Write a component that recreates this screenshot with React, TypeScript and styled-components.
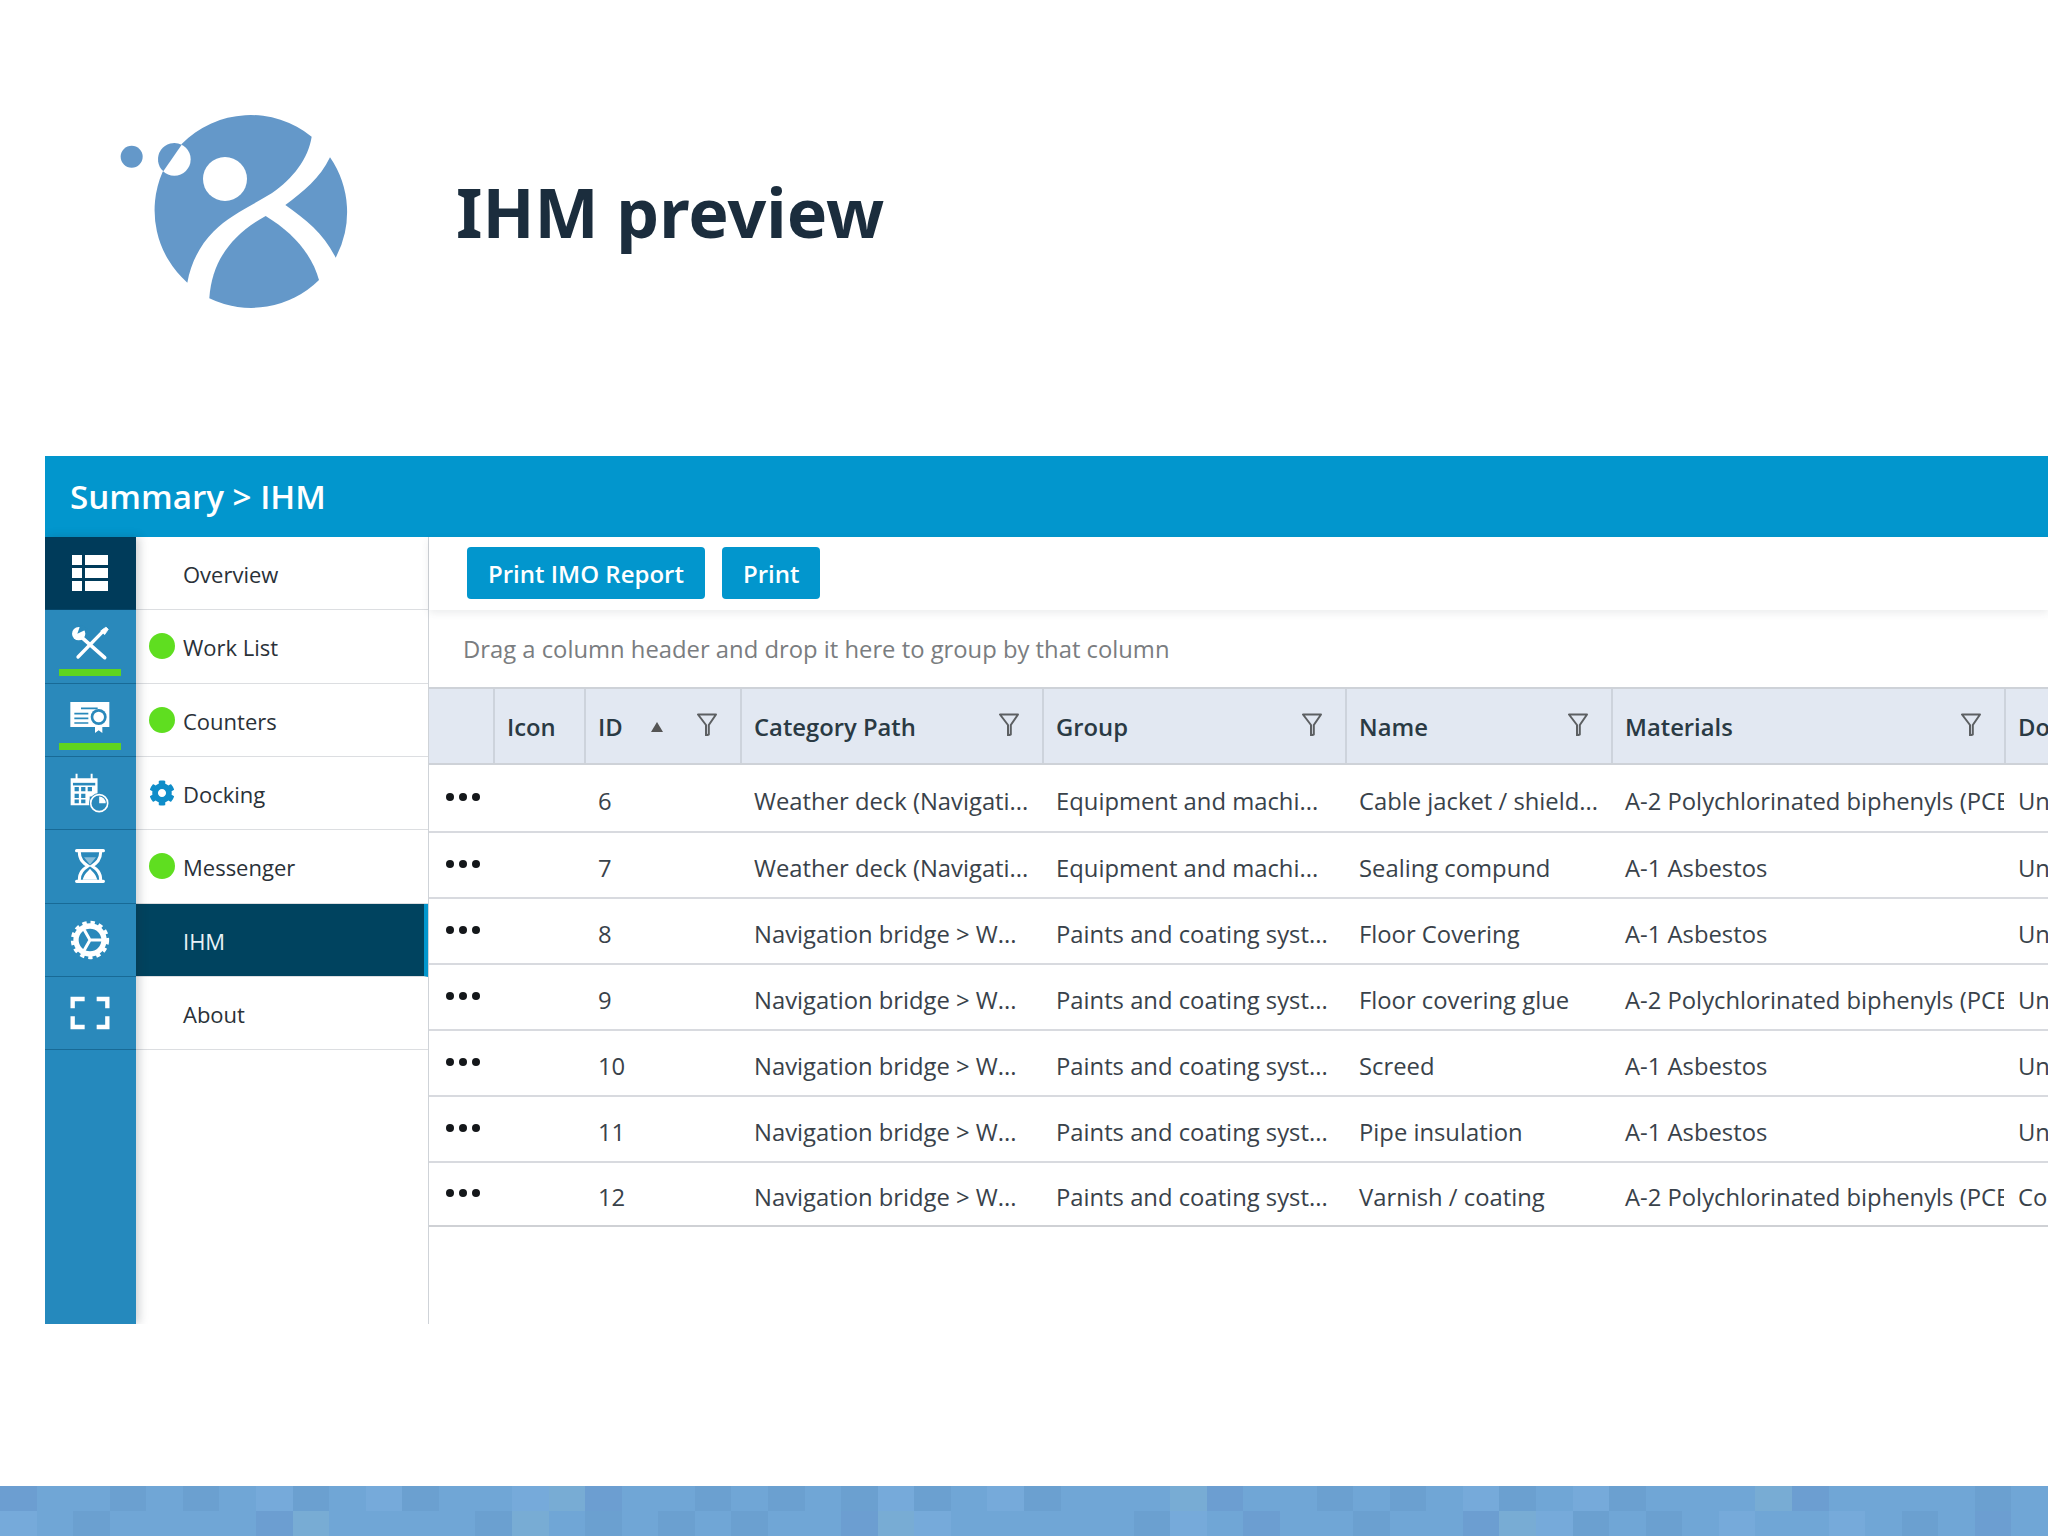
import React from "react";
import styled, { createGlobalStyle } from "styled-components";
import { FaCog } from "react-icons/fa";

const Global = createGlobalStyle`
  html, body { margin: 0; padding: 0; background: #fff; }
  body { font-family: "Open Sans", "Noto Sans", sans-serif; overflow: hidden; }
`;

const Page = styled.div`
  width: 2048px;
  height: 1536px;
  display: flex;
  flex-direction: column;
  overflow: hidden;
  background: #fff;
`;

const Hero = styled.header`
  display: flex;
  align-items: center;
  gap: 66px;
  height: 240px;
  padding: 90px 0 0 90px;
`;

const LogoSvg = styled.svg`
  width: 300px;
  height: 240px;
  flex: none;
`;

const Title = styled.h1`
  margin: 4px 0 0;
  font-family: "Noto Sans", sans-serif;
  font-weight: 700;
  font-size: 68px;
  line-height: 1;
  color: #1b2d3d;
`;

const Frame = styled.section`
  margin: 126px 0 0 45px;
  height: 868px;
  display: flex;
  flex-direction: column;
  overflow: hidden;
`;

const TopBar = styled.div`
  height: 81px;
  flex: none;
  display: flex;
  align-items: center;
  padding-left: 25px;
  background: #0296cd;
  color: #fff;
  font-weight: 600;
  font-size: 33.2px;
`;

const Body = styled.div`
  flex: 1;
  display: flex;
  min-height: 0;
`;

const Rail = styled.nav`
  width: 91px;
  flex: none;
  position: relative;
  z-index: 2;
  background: #2589bd;
  box-shadow: 3px 0 9px rgba(30, 40, 50, 0.22);
`;

const RailItem = styled.div<{ $active?: boolean; $status?: boolean }>`
  height: 73.33px;
  box-sizing: border-box;
  display: flex;
  flex-direction: column;
  align-items: center;
  justify-content: ${(p) => (p.$status ? "flex-start" : "center")};
  padding: ${(p) => (p.$status ? "13px" : "0")} 2px 0 0;
  gap: 6px;
  background: ${(p) => (p.$active ? "#003b5a" : "#2a89bb")};
  border-bottom: 1px solid rgba(10, 80, 120, 0.55);
`;

const RailIcon = styled.svg`
  width: 40px;
  height: 40px;
  flex: none;
  color: #fff;
`;

const StatusBar = styled.div`
  width: 62px;
  height: 7px;
  flex: none;
  background: #5fd41f;
`;

const Menu = styled.div`
  width: 293px;
  flex: none;
  box-sizing: border-box;
  border-right: 1px solid #cfd3d8;
  background: #fff;
`;

const MenuItem = styled.div<{ $active?: boolean }>`
  height: 73.33px;
  box-sizing: border-box;
  display: flex;
  align-items: center;
  padding-left: 13px;
  gap: 8px;
  font-size: 22px;
  color: ${(p) => (p.$active ? "#e8f2f7" : "#2a3138")};
  background: ${(p) => (p.$active ? "#00435f" : "#fff")};
  border-bottom: 1px solid #dcdee1;
  border-right: ${(p) => (p.$active ? "4px solid #0296cd" : "0")};
`;

const MenuLabel = styled.span`
  padding-top: 2px;
`;

const MenuMark = styled.span`
  width: 26px;
  height: 26px;
  flex: none;
  display: flex;
  align-items: center;
  justify-content: center;
  color: #0f8dc9;
  font-size: 26px;
`;

const GreenDot = styled.span`
  width: 26px;
  height: 26px;
  border-radius: 50%;
  background: #5fde20;
`;

const Main = styled.main`
  flex: 1;
  min-width: 0;
  display: flex;
  flex-direction: column;
  background: #fff;
`;

const Toolbar = styled.div`
  height: 73px;
  flex: none;
  box-sizing: border-box;
  display: flex;
  align-items: center;
  gap: 17px;
  padding: 0 0 1px 38px;
  position: relative;
  background: #fff;
  box-shadow: 0 3px 8px rgba(60, 70, 80, 0.1);
`;

const Button = styled.button`
  height: 52px;
  padding: 0 21px;
  border: 0;
  border-radius: 4px;
  background: #0296cd;
  color: #fff;
  font-family: "Open Sans", sans-serif;
  font-weight: 600;
  font-size: 24px;
`;

const GroupBar = styled.div`
  height: 77px;
  flex: none;
  box-sizing: border-box;
  display: flex;
  align-items: center;
  padding-left: 34px;
  color: #7a7d80;
  font-size: 23.8px;
`;

const columns = "64px 91px 156px 302px 303px 266px 393px 44px";

const HeaderRow = styled.div`
  height: 78px;
  flex: none;
  box-sizing: border-box;
  display: grid;
  grid-template-columns: ${columns};
  background: #e2e8f2;
  border-top: 2px solid #ced2d8;
  border-bottom: 2px solid #ced2d8;
`;

const HeadCell = styled.div`
  display: flex;
  align-items: center;
  box-sizing: border-box;
  padding: 2px 23px 0 12px;
  overflow: hidden;
  white-space: nowrap;
  font-weight: 600;
  font-size: 23.8px;
  color: #2a3a44;
  & + & {
    border-left: 2px solid #cdd3dc;
  }
`;

const SortMark = styled.span`
  width: 0;
  height: 0;
  margin-left: 28px;
  border-left: 6px solid transparent;
  border-right: 6px solid transparent;
  border-bottom: 10px solid #555;
`;

const FilterIcon = styled.svg`
  width: 20px;
  height: 23px;
  flex: none;
  margin: -5px 0 0 auto;
`;

const TableRow = styled.div`
  height: 66px;
  flex: none;
  box-sizing: border-box;
  display: grid;
  grid-template-columns: ${columns};
  border-bottom: 2px solid #d8dadf;
  &:first-of-type {
    height: 68px;
  }
  &:last-child {
    height: 64px;
    border-bottom-color: #cfd1d5;
  }
`;

const Cell = styled.div`
  display: flex;
  align-items: center;
  box-sizing: border-box;
  padding: 5px 0 0 14px;
  overflow: hidden;
  white-space: nowrap;
  font-size: 23.8px;
  color: #39424a;
`;

const DotsCell = styled.div`
  display: flex;
  align-items: center;
  gap: 5px;
  padding: 0 0 2px 17px;
`;

const Dot = styled.span`
  width: 8px;
  height: 8px;
  border-radius: 50%;
  background: #14171a;
`;

const Footer = styled.footer`
  margin-top: auto;
  height: 50px;
  flex: none;
  display: grid;
  grid-template-columns: repeat(56, 1fr);
  grid-template-rows: 25px 25px;
`;

const tileColor: Record<string, string> = {
  a: "#70a6d6",
  b: "#6ba0d0",
  c: "#76aada",
  d: "#78acd4",
  e: "#6c9ed1",
};

const Tile = styled.i<{ $tone: string }>`
  display: block;
  background: ${(p) => tileColor[p.$tone]};
`;

const row1 = "eaababacbacbaacdeaa" + "bababcbacbaaadeaaba" + "bacbacbaaadeaaaaba";
const row2 = "cabaaaaedaaaabdabab" + "abaaedcaaaaabcaeaab" + "aaedcbabacaacabaeaa";

const Funnel = () => (
  <FilterIcon viewBox="0 0 20 23" fill="none" stroke="#5c5f62" strokeWidth="2">
    <path d="M1 1.5h18L11.8 12V21.5L9 22.5V12z" strokeLinejoin="round" />
  </FilterIcon>
);

const Logo = () => (
  <LogoSvg viewBox="0 0 900 720" aria-label="logo">
    <g fill="#6498c9">
      <circle cx="125" cy="200" r="33" />
      <path d="M275 162A290 290 0 0 1 665 140C655 205 610 265 545 310C480 350 420 375 370 425C330 465 302 520 292 578A289 289 0 0 1 218 245z" />
      <path d="M720 202A289 289 0 0 1 737 503C700 430 650 390 586 345C640 305 690 265 720 202z" />
      <path d="M527 378C605 425 665 490 687 570A289 289 0 0 1 358 625C365 510 430 430 527 378z" />
    </g>
    <circle cx="253" cy="208" r="49" fill="#fff" />
    <path d="M275 164A49 49 0 0 0 220 244z" fill="#6498c9" />
    <circle cx="405" cy="267" r="66" fill="#fff" />
  </LogoSvg>
);

const ListIcon = () => (
  <RailIcon viewBox="0 0 40 40" fill="currentColor">
    <rect x="2" y="2" width="10" height="10" />
    <rect x="15" y="2" width="23" height="10" />
    <rect x="2" y="15" width="10" height="10" />
    <rect x="15" y="15" width="23" height="10" />
    <rect x="2" y="28" width="10" height="10" />
    <rect x="15" y="28" width="23" height="10" />
  </RailIcon>
);

const ToolsIcon = () => (
  <RailIcon viewBox="30 22 120 120" fill="none" stroke="currentColor">
    <path d="M132 44L54 124" strokeWidth="10" strokeLinecap="round" />
    <path d="M122 46l16-12 7 7-11 16z" fill="currentColor" strokeWidth="2" />
    <path d="M66 66L134 126" strokeWidth="11" strokeLinecap="round" />
    <circle cx="56" cy="54" r="20" fill="currentColor" stroke="none" />
    <path d="M52 54L62 26 82 40z" fill="#2a89bb" stroke="none" />
  </RailIcon>
);

const CertIcon = () => (
  <RailIcon viewBox="29 240 120 120" fill="none">
    <path d="M30 255H147V330H126V348L115 340 104 348V330H30z" fill="currentColor" />
    <path d="M42 290H84M42 304H84M42 318H84M62 274H112" stroke="#2a89bb" strokeWidth="5" />
    <circle cx="115" cy="300" r="24" fill="#2a89bb" />
    <circle cx="115" cy="300" r="16" fill="currentColor" />
  </RailIcon>
);

const CalendarIcon = () => (
  <RailIcon viewBox="28 20 122 122" fill="none">
    <path d="M30 36H112V92H88V118H30z" fill="currentColor" />
    <path d="M48 22V42M94 22V42" stroke="currentColor" strokeWidth="6" />
    <path d="M37 50H105V58H37z" fill="#2a89bb" />
    <path
      d="M42 63h13v13H42zM62 63h13v13H62zM82 63h13v13H82zM42 83h13v13H42zM62 83h13v13H62zM42 101h13v11H42zM62 101h13v11H62z"
      fill="#2a89bb"
    />
    <circle cx="117" cy="112" r="31" fill="#2a89bb" />
    <circle cx="117" cy="112" r="26" stroke="currentColor" strokeWidth="5" />
    <path d="M117 92V112H137A20 20 0 0 0 117 92z" fill="currentColor" />
  </RailIcon>
);

const HourglassIcon = () => (
  <RailIcon viewBox="30 244 120 120" fill="none" stroke="currentColor">
    <path d="M50 258H130M50 350H130" strokeWidth="10" strokeLinecap="round" />
    <path d="M58 262C58 285 70 295 84 304C70 313 58 323 58 346M122 262C122 285 110 295 96 304C110 313 122 323 122 346" strokeWidth="9" />
    <path d="M68 345C74 325 84 320 90 312C96 320 106 325 112 345z" fill="currentColor" stroke="none" />
    <path d="M72 278H108L90 300z" fill="currentColor" stroke="none" opacity="0.45" />
  </RailIcon>
);

const GearIcon = () => (
  <RailIcon viewBox="28 25 120 120" fill="none" stroke="currentColor">
    <circle cx="88" cy="85" r="42" strokeWidth="16" />
    <circle cx="88" cy="85" r="52" strokeWidth="11" strokeDasharray="13 11.5" />
    <path d="M130 85H88L68 50M88 85L68 120" strokeWidth="9" />
  </RailIcon>
);

const ExpandIcon = () => (
  <RailIcon viewBox="28 242 120 120" fill="none" stroke="currentColor" strokeWidth="13">
    <path d="M72 260H36V288M108 260H140V288M36 312V344H72M140 312V344H108" />
  </RailIcon>
);

type RowData = [string, string, string, string, string, string];

const rows: RowData[] = [
  ["6", "Weather deck (Navigati...", "Equipment and machi...", "Cable jacket / shield...", "A-2 Polychlorinated biphenyls (PCB)", "Un"],
  ["7", "Weather deck (Navigati...", "Equipment and machi...", "Sealing compund", "A-1 Asbestos", "Un"],
  ["8", "Navigation bridge > W...", "Paints and coating syst...", "Floor Covering", "A-1 Asbestos", "Un"],
  ["9", "Navigation bridge > W...", "Paints and coating syst...", "Floor covering glue", "A-2 Polychlorinated biphenyls (PCB)", "Un"],
  ["10", "Navigation bridge > W...", "Paints and coating syst...", "Screed", "A-1 Asbestos", "Un"],
  ["11", "Navigation bridge > W...", "Paints and coating syst...", "Pipe insulation", "A-1 Asbestos", "Un"],
  ["12", "Navigation bridge > W...", "Paints and coating syst...", "Varnish / coating", "A-2 Polychlorinated biphenyls (PCB)", "Co"],
];

export default function App() {
  return (
    <Page>
      <Global />
      <Hero>
        <Logo />
        <Title>IHM preview</Title>
      </Hero>
      <Frame>
        <TopBar>Summary &gt; IHM</TopBar>
        <Body>
          <Rail>
            <RailItem $active><ListIcon /></RailItem>
            <RailItem $status><ToolsIcon /><StatusBar /></RailItem>
            <RailItem $status><CertIcon /><StatusBar /></RailItem>
            <RailItem><CalendarIcon /></RailItem>
            <RailItem><HourglassIcon /></RailItem>
            <RailItem><GearIcon /></RailItem>
            <RailItem><ExpandIcon /></RailItem>
          </Rail>
          <Menu>
            <MenuItem><MenuMark /><MenuLabel>Overview</MenuLabel></MenuItem>
            <MenuItem><MenuMark><GreenDot /></MenuMark><MenuLabel>Work List</MenuLabel></MenuItem>
            <MenuItem><MenuMark><GreenDot /></MenuMark><MenuLabel>Counters</MenuLabel></MenuItem>
            <MenuItem><MenuMark><FaCog /></MenuMark><MenuLabel>Docking</MenuLabel></MenuItem>
            <MenuItem><MenuMark><GreenDot /></MenuMark><MenuLabel>Messenger</MenuLabel></MenuItem>
            <MenuItem $active><MenuMark /><MenuLabel>IHM</MenuLabel></MenuItem>
            <MenuItem><MenuMark /><MenuLabel>About</MenuLabel></MenuItem>
          </Menu>
          <Main>
            <Toolbar>
              <Button>Print IMO Report</Button>
              <Button>Print</Button>
            </Toolbar>
            <GroupBar>Drag a column header and drop it here to group by that column</GroupBar>
            <HeaderRow>
              <HeadCell />
              <HeadCell>Icon</HeadCell>
              <HeadCell>ID<SortMark /><Funnel /></HeadCell>
              <HeadCell>Category Path<Funnel /></HeadCell>
              <HeadCell>Group<Funnel /></HeadCell>
              <HeadCell>Name<Funnel /></HeadCell>
              <HeadCell>Materials<Funnel /></HeadCell>
              <HeadCell>Do</HeadCell>
            </HeaderRow>
            <div>
              {rows.map((r) => (
                <TableRow key={r[0]}>
                  <DotsCell><Dot /><Dot /><Dot /></DotsCell>
                  <Cell />
                  <Cell>{r[0]}</Cell>
                  <Cell>{r[1]}</Cell>
                  <Cell>{r[2]}</Cell>
                  <Cell>{r[3]}</Cell>
                  <Cell>{r[4]}</Cell>
                  <Cell>{r[5]}</Cell>
                </TableRow>
              ))}
            </div>
          </Main>
        </Body>
      </Frame>
      <Footer>
        {(row1 + row2).split("").map((t, i) => (
          <Tile key={i} $tone={t} />
        ))}
      </Footer>
    </Page>
  );
}
